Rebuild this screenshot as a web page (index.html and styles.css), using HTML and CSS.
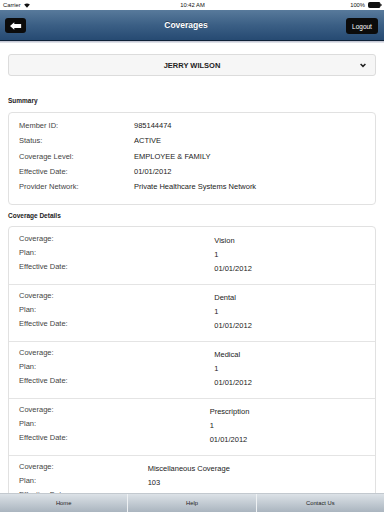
FILE: index.html
```html
<!DOCTYPE html>
<html>
<head>
<meta charset="utf-8">
<link rel="stylesheet" href="styles.css">
</head>
<body>
<div class="app">
  <div class="statusbar">
    <div class="sb-left">Carrier
      <svg class="wifi" width="8" height="6" viewBox="0 0 8 6"><path d="M0.2 1.8 Q4 -1 7.8 1.8 L4 6 Z" fill="#111"/></svg>
    </div>
    <div class="sb-center">10:42 AM</div>
    <div class="sb-right">100%
      <svg class="battery" width="14" height="6" viewBox="0 0 14 6"><rect x="0.5" y="0.5" width="11.5" height="5" rx="1" fill="#111" stroke="#111"/><rect x="12.3" y="2" width="1.2" height="2" fill="#111"/></svg>
    </div>
  </div>
  <header class="navbar">
    <div class="back-btn">
      <svg width="14" height="9" viewBox="0 0 14 9"><path d="M0 4.5 L5 0 L5 2.2 L13 2.2 L13 6.8 L5 6.8 L5 9 Z" fill="#fff"/></svg>
    </div>
    <div class="nav-title">Coverages</div>
    <div class="logout-btn">Logout</div>
  </header>
  <div class="nav-shadow"></div>
  <main class="content">
    <div class="select">
      <span class="select-text">JERRY WILSON</span>
      <svg class="chev" width="6" height="5" viewBox="0 0 6 5"><path d="M0.6 1 L3 3.4 L5.4 1" fill="none" stroke="#222" stroke-width="1.5"/></svg>
    </div>

    <h2 class="section-title summary-title">Summary</h2>
    <div class="card summary">
      <div class="srow"><span class="slabel">Member ID:</span><span class="svalue">985144474</span></div>
      <div class="srow"><span class="slabel">Status:</span><span class="svalue">ACTIVE</span></div>
      <div class="srow"><span class="slabel">Coverage Level:</span><span class="svalue">EMPLOYEE &amp; FAMILY</span></div>
      <div class="srow"><span class="slabel">Effective Date:</span><span class="svalue">01/01/2012</span></div>
      <div class="srow"><span class="slabel">Provider Network:</span><span class="svalue">Private Healthcare Systems Network</span></div>
    </div>

    <h2 class="section-title details-title">Coverage Details</h2>
    <div class="card details">
      <div class="block">
        <table class="ctable"><tr><td class="cl">Coverage:</td><td class="cv">Vision</td></tr><tr><td class="cl">Plan:</td><td class="cv">1</td></tr><tr><td class="cl">Effective Date:</td><td class="cv">01/01/2012</td></tr></table>
      </div>
      <div class="block">
        <table class="ctable"><tr><td class="cl">Coverage:</td><td class="cv">Dental</td></tr><tr><td class="cl">Plan:</td><td class="cv">1</td></tr><tr><td class="cl">Effective Date:</td><td class="cv">01/01/2012</td></tr></table>
      </div>
      <div class="block">
        <table class="ctable"><tr><td class="cl">Coverage:</td><td class="cv">Medical</td></tr><tr><td class="cl">Plan:</td><td class="cv">1</td></tr><tr><td class="cl">Effective Date:</td><td class="cv">01/01/2012</td></tr></table>
      </div>
      <div class="block">
        <table class="ctable"><tr><td class="cl">Coverage:</td><td class="cv">Prescription</td></tr><tr><td class="cl">Plan:</td><td class="cv">1</td></tr><tr><td class="cl">Effective Date:</td><td class="cv">01/01/2012</td></tr></table>
      </div>
      <div class="block">
        <table class="ctable"><tr><td class="cl">Coverage:</td><td class="cv">Miscellaneous Coverage</td></tr><tr><td class="cl">Plan:</td><td class="cv">103</td></tr><tr><td class="cl">Effective Date:</td><td class="cv">01/01/2012</td></tr></table>
      </div>
    </div>
  </main>
  <footer class="tabbar">
    <div class="tab">Home</div>
    <div class="tab">Help</div>
    <div class="tab">Contact Us</div>
  </footer>
</div>
</body>
</html>
```

FILE: styles.css
```css
* { box-sizing: border-box; }
html, body { margin: 0; padding: 0; }
body {
  font-family: "Liberation Sans", Arial, Helvetica, sans-serif;
  background: #fff;
  color: #222;
}
.app {
  width: 384px;
  height: 512px;
  display: flex;
  flex-direction: column;
  overflow: hidden;
}
.statusbar {
  height: 10px;
  flex: none;
  display: flex;
  align-items: center;
  justify-content: space-between;
  padding: 0 2px 0 3px;
  font-size: 5.8px;
  color: #111;
  background: #fff;
}
.sb-left, .sb-right { flex: 1; display: flex; align-items: center; gap: 3px; }
.sb-right { justify-content: flex-end; }
.sb-center { flex: none; }
.wifi { width: 6px; height: 5px; }
.navbar {
  height: 31px;
  flex: none;
  display: flex;
  align-items: center;
  justify-content: space-between;
  padding: 0 6px 0 5px;
  background: linear-gradient(#587a9b, #3b5f85 50%, #264a72);
  border-bottom: 1px solid #0e2137;
}
.nav-shadow {
  height: 2px;
  flex: none;
  background: linear-gradient(#b9bccb, #eceef2);
}
.back-btn {
  width: 21px;
  height: 15px;
  background: #0b0b0b;
  border-radius: 3px;
  display: flex;
  align-items: center;
  justify-content: center;
  margin-top: 1px;
}
.back-btn svg { width: 12px; height: 8px; }
.nav-title {
  color: #fff;
  font-weight: bold;
  font-size: 8.5px;
  text-shadow: 0 -1px 0 rgba(0,0,0,0.4);
}
.logout-btn {
  background: #0b0b0b;
  color: #fff;
  font-size: 6.5px;
  border-radius: 3px;
  padding: 0 5px;
  width: 32px;
  justify-content: center;
  height: 16px;
  display: flex;
  align-items: center;
  margin-top: 2px;
}
.content {
  flex: 1;
  overflow: hidden;
  padding: 11px 8px 0 8px;
}
.select {
  height: 22px;
  background: #f6f6f6;
  border: 1px solid #dcdcdc;
  border-radius: 3px;
  display: flex;
  align-items: center;
  justify-content: center;
  position: relative;
}
.select-text {
  font-weight: bold;
  font-size: 7.5px;
  color: #222;
}
.chev {
  position: absolute;
  right: 9px;
  top: 8px;
}
.section-title {
  margin: 0;
  font-size: 6.5px;
  font-weight: bold;
  color: #222;
}
.summary-title { margin-top: 21px; margin-bottom: 8px; }
.details-title { margin-top: 7px; margin-bottom: 7px; }
.card {
  background: #fff;
  border: 1px solid #e1e1e1;
  border-radius: 4px;
}
.summary { padding: 5px 10px 10px; }
.srow {
  display: flex;
  font-size: 7.5px;
  line-height: 15.3px;
  color: #333;
}
.slabel { width: 115px; flex: none; color: #444; }
.svalue { color: #222; }
.block {
  padding: 5px 10px 9px;
  border-top: 1px solid #e4e4e4;
}
.block:first-child { border-top: none; padding-top: 6px; }
.ctable {
  width: 100%;
  border-collapse: collapse;
  font-size: 7.5px;
}
.ctable td { padding: 0; }
.cl {
  color: #444;
  line-height: 12px;
  padding-bottom: 2px !important;
  vertical-align: top;
}
.cv {
  color: #222;
  line-height: 12px;
  padding-top: 2px !important;
  vertical-align: top;
}
.tabbar {
  height: 19px;
  flex: none;
  display: flex;
  background: linear-gradient(#dce2e7, #aab5bf);
  border-top: 1px solid #c3c9cf;
}
.tab {
  flex: 1;
  display: flex;
  align-items: center;
  justify-content: center;
  font-size: 5.8px;
  color: #222;
  border-left: 1px solid #eef1f3;
}
.tab:first-child { border-left: none; }
```
